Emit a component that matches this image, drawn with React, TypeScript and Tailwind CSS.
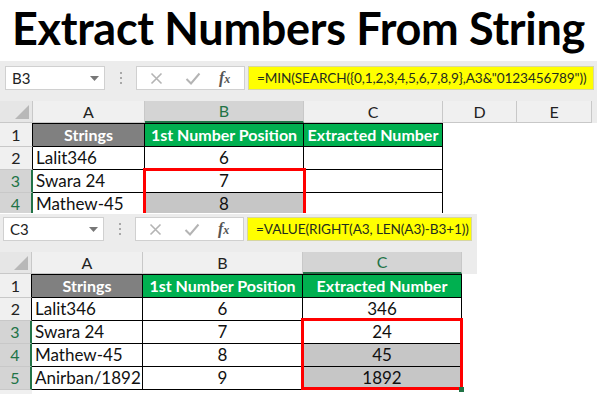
import React from 'react';

type Row = {
  a: string;
  b: string;
  c: string;
  sel?: boolean;
  shadeB?: boolean;
  shadeC?: boolean;
};

const sheet1Rows: Row[] = [
  { a: 'Lalit346', b: '6', c: '' },
  { a: 'Swara 24', b: '7', c: '', sel: true },
  { a: 'Mathew-45', b: '8', c: '', sel: true, shadeB: true },
];

const sheet2Rows: Row[] = [
  { a: 'Lalit346', b: '6', c: '346' },
  { a: 'Swara 24', b: '7', c: '24', sel: true },
  { a: 'Mathew-45', b: '8', c: '45', sel: true, shadeC: true },
  { a: 'Anirban/1892', b: '9', c: '1892', sel: true, shadeC: true },
];

function FormulaBar({ cell, formula, nameX, top, height, barW }: { cell: string; formula: string; nameX: string; top: string; height: string; barW: string }) {
  return (
    <div className={`flex items-start bg-[#ececec] ${top} ${height}`}>
      <div className={`flex h-[24px] items-center justify-between border border-[#d0d0d0] bg-white pl-[6px] pr-[5px] text-[15px] text-[#222] ${nameX}`}>
        <span>{cell}</span>
        <svg width="9" height="5" viewBox="0 0 9 5">
          <path d="M0 0 L9 0 L4.5 5 Z" fill="#777" />
        </svg>
      </div>
      <div className="flex h-[24px] w-[31px] flex-col items-center justify-center gap-[3px]">
        <span className="h-[2px] w-[2px] bg-[#a8a8a8]" />
        <span className="h-[2px] w-[2px] bg-[#a8a8a8]" />
        <span className="h-[2px] w-[2px] bg-[#a8a8a8]" />
      </div>
      <div className="flex h-[24px] w-[109px] items-center border border-[#d0d0d0] bg-white">
        <svg width="13" height="13" viewBox="0 0 13 13" className="ml-[13px]">
          <path d="M1.5 1.5 L11.5 11.5 M11.5 1.5 L1.5 11.5" stroke="#b4b4b4" strokeWidth="1.6" />
        </svg>
        <svg width="16" height="13" viewBox="0 0 16 13" className="ml-[22px]">
          <path d="M1.5 7 L6 11.5 L14.5 1.5" stroke="#b4b4b4" strokeWidth="2" fill="none" />
        </svg>
        <span className="ml-[18px] font-['Liberation_Serif',serif] text-[16px] italic font-bold text-[#555]">
          f<span className="text-[12px]">x</span>
        </span>
      </div>
      <div className={`ml-[3px] flex h-[24px] items-center border border-[#d6d6a0] bg-[#ffff00] pl-[8px] text-[13.6px] tracking-[-0.1px] text-[#1f2d1f] whitespace-nowrap overflow-hidden ${barW}`}>
        {formula}
      </div>
    </div>
  );
}

function ColHeader({ label, w, sel }: { label: string; w: string; sel?: boolean }) {
  return (
    <div
      className={`flex h-full items-center justify-center border-r border-[#c8c8c8] text-[16px] ${w} ${
        sel ? 'bg-[#d4d4d4] text-[#217346] border-b-2 border-b-[#217346]' : 'bg-[#f0f0f0] text-[#222] border-b border-b-[#c8c8c8]'
      }`}
    >
      {label}
    </div>
  );
}

function RowHeader({ n, sel, w }: { n: string; sel?: boolean; w: string }) {
  return (
    <div
      className={`flex h-full items-center justify-center border-b border-[#c8c8c8] text-[16px] ${w} ${
        sel ? 'bg-[#d4d4d4] text-[#217346] border-r-2 border-r-[#217346]' : 'bg-[#f0f0f0] text-[#222] border-r border-r-black'
      }`}
    >
      {n}
    </div>
  );
}

function Corner({ w }: { w: string }) {
  return (
    <div className={`relative h-full border-r border-b border-[#c8c8c8] bg-[#e6e6e6] ${w}`}>
      <svg width="14" height="14" viewBox="0 0 14 14" className="absolute right-[3px] bottom-[3px]">
        <path d="M14 0 L14 14 L0 14 Z" fill="#b8b8b8" />
      </svg>
    </div>
  );
}

export default function App() {
  return (
    <div className="relative h-[394px] w-[597px] overflow-hidden bg-white font-['Lato',sans-serif]">
      {/* title */}
      <div className="flex h-[60px] items-center justify-center whitespace-nowrap pb-[3px] text-[45px] font-bold tracking-[-0.3px] text-black">
        Extract Numbers From String
      </div>

      {/* first screenshot */}
      <div className="relative h-[153px] overflow-hidden pt-px">
        <FormulaBar
          cell="B3"
          formula={'=MIN(SEARCH({0,1,2,3,4,5,6,7,8,9},A3&"0123456789"))'}
          nameX="ml-[5px] w-[100px]"
          top="pt-[5px]"
          height="h-[40px]"
          barW="w-[346px]"
        />
        <div className="flex h-[22px] bg-[#ececec]">
          <Corner w="w-[33px]" />
          <ColHeader label="A" w="w-[112px]" />
          <ColHeader label="B" w="w-[159px]" sel />
          <ColHeader label="C" w="w-[139px]" />
          <ColHeader label="D" w="w-[74px]" />
          <ColHeader label="E" w="w-[75px]" />
        </div>
        <div className="flex h-[24px]">
          <RowHeader n="1" w="w-[33px]" />
          <div className="flex w-[112px] items-center justify-center border-y border-r border-black bg-[#808080] text-[16px] font-bold text-white">Strings</div>
          <div className="flex w-[159px] items-center justify-center border-y border-r border-black bg-[#00b050] text-[16px] font-bold text-white">1st Number Position</div>
          <div className="flex w-[139px] items-center justify-center border-y border-r border-black bg-[#00b050] text-[16px] font-bold text-white">Extracted Number</div>
        </div>
        {sheet1Rows.map((r, i) => (
          <div key={i} className="flex h-[23px]">
            <RowHeader n={String(i + 2)} sel={r.sel} w="w-[33px]" />
            <div className="flex w-[112px] items-center border-b border-r border-black pl-[3px] text-[17px] text-[#111]">{r.a}</div>
            <div className={`flex w-[159px] items-center justify-center border-b border-r border-black text-[17px] text-[#111] ${r.shadeB ? 'bg-[#c6c6c6]' : ''}`}>{r.b}</div>
            <div className="w-[139px] border-b border-r border-black" />
          </div>
        ))}
        <div className="pointer-events-none absolute left-[143px] top-[108px] h-[60px] w-[163px] border-[3px] border-[#ff0000]" />
      </div>

      {/* second screenshot */}
      <div className="relative w-[477px] pt-px">
        <FormulaBar
          cell="C3"
          formula="=VALUE(RIGHT(A3, LEN(A3)-B3+1))"
          nameX="ml-[3px] w-[101px]"
          top="pt-[3px]"
          height="h-[38px]"
          barW="w-[225px]"
        />
        <div className="flex h-[22px] bg-[#ececec]">
          <Corner w="w-[32px]" />
          <ColHeader label="A" w="w-[111px]" />
          <ColHeader label="B" w="w-[160px]" />
          <ColHeader label="C" w="w-[159px]" sel />
        </div>
        <div className="flex h-[24px]">
          <RowHeader n="1" w="w-[32px]" />
          <div className="flex w-[111px] items-center justify-center border-y border-r border-black bg-[#808080] text-[16px] font-bold text-white">Strings</div>
          <div className="flex w-[160px] items-center justify-center border-y border-r border-black bg-[#00b050] text-[16px] font-bold text-white">1st Number Position</div>
          <div className="flex w-[159px] items-center justify-center border-y border-r border-black bg-[#00b050] text-[16px] font-bold text-white">Extracted Number</div>
        </div>
        {sheet2Rows.map((r, i) => (
          <div key={i} className="flex h-[23px]">
            <RowHeader n={String(i + 2)} sel={r.sel} w="w-[32px]" />
            <div className="flex w-[111px] items-center border-b border-r border-black pl-[3px] text-[17px] text-[#111]">{r.a}</div>
            <div className="flex w-[160px] items-center justify-center border-b border-r border-black text-[17px] text-[#111]">{r.b}</div>
            <div className={`flex w-[159px] items-center justify-center border-b border-r border-black text-[17px] text-[#111] ${r.shadeC ? 'bg-[#c6c6c6]' : ''}`}>{r.c}</div>
          </div>
        ))}
        <div className="flex h-[6px]">
          <div className="w-[32px] bg-[#f0f0f0]" />
        </div>
        <div className="pointer-events-none absolute left-[301px] top-[105px] h-[72px] w-[162px] border-[3px] border-[#ff0000]" />
        <div className="pointer-events-none absolute left-[459px] top-[174px] h-[5px] w-[5px] bg-[#217346]" />
      </div>
    </div>
  );
}
